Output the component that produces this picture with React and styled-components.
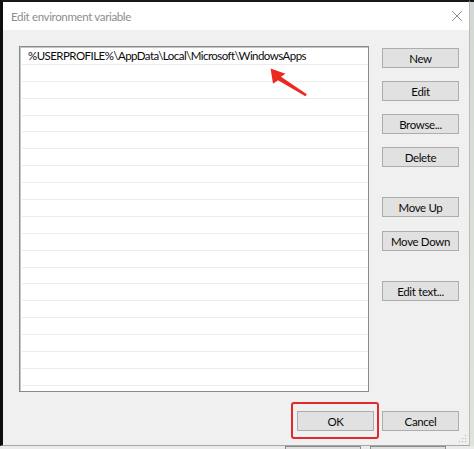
import React from 'react';
import styled, { createGlobalStyle } from 'styled-components';

const FONT = '"Lato", "Liberation Sans", sans-serif';

const Global = createGlobalStyle`
  html, body { margin: 0; padding: 0; background: #e3e3e3; }
  body { font-family: ${FONT}; }
  #root { width: 474px; height: 449px; }
`;

const Page = styled.div`
  width: 474px;
  height: 449px;
  overflow: hidden;
  display: flex;
  flex-direction: column;
  background: #e6e6e6;
`;

const Upper = styled.div`
  display: flex;
  height: 446px;
  flex: none;
`;

const Dialog = styled.div`
  width: 470px;
  box-sizing: border-box;
  display: flex;
  flex-direction: column;
  border-left: 3px solid #0e0e0e;
  border-top: 2px solid #181818;
  border-right: 1px solid #bcbcbc;
  border-bottom: 1px solid #a6a6a6;
  background: #f0f0f0;
  position: relative;
`;

const SideStrip = styled.div`
  flex: 1;
  border-top: 2px solid #181818;
  background: linear-gradient(#d4d8d4, #dfe4da);
`;

const TitleBar = styled.div`
  height: 28px;
  flex: none;
  background: #ffffff;
  display: flex;
  align-items: center;
  justify-content: space-between;
  padding: 0 6px 0 8px;
`;

const Title = styled.span`
  font-size: 11.5px;
  letter-spacing: -0.35px;
  color: #8d8d8d;
`;

const Body = styled.div`
  flex: 1;
  display: flex;
  flex-direction: column;
  padding: 16px 10px 14px 16px;
`;

const Main = styled.div`
  display: flex;
  gap: 13px;
`;

const List = styled.div`
  position: relative;
  width: 350px;
  height: 346px;
  box-sizing: border-box;
  background: #ffffff;
  border: 1px solid #8a8a8a;
  box-shadow: inset 1px 1px 0 #c4c4c4;
  overflow: hidden;
  padding-top: 1px;
`;

const Row = styled.div`
  height: 16.9px;
  box-sizing: border-box;
  margin-left: 2px;
  border-bottom: 1px solid #ececec;
  display: flex;
  align-items: center;
  padding-left: 6px;
  font-size: 11.5px;
  letter-spacing: -0.55px;
  color: #0a0a0a;
  white-space: nowrap;
`;

const ButtonCol = styled.div`
  display: flex;
  flex-direction: column;
  padding-top: 2px;
`;

const Button = styled.button`
  width: 77px;
  height: 20px;
  box-sizing: border-box;
  margin: ${p => p.$top || 0}px 0 0 0;
  padding: 0;
  background: #e1e1e1;
  border: 1px solid #adadad;
  font-family: ${FONT};
  font-size: 11.5px;
  letter-spacing: -0.35px;
  color: #0a0a0a;
  display: flex;
  align-items: center;
  justify-content: center;
`;

const Footer = styled.div`
  margin-top: auto;
  display: flex;
  justify-content: flex-end;
  gap: 8px;
`;

const Highlight = styled.div`
  position: relative;
  display: flex;
`;

const RedBox = styled.div`
  position: absolute;
  left: -6px;
  right: -5px;
  top: -9px;
  bottom: -8px;
  border: 2.5px solid #e3282b;
  border-radius: 3px;
  pointer-events: none;
`;

const Annotation = styled.svg`
  position: absolute;
  left: 0;
  top: 0;
  width: 100%;
  height: 100%;
  pointer-events: none;
`;

const Grip = styled.svg`
  position: absolute;
  right: 2px;
  bottom: 2px;
  width: 8px;
  height: 8px;
`;

const Peek = styled.div`
  flex: 1;
  display: flex;
  background: #ebebeb;
  padding-left: 285px;
  gap: 9px;
`;

const PeekButton = styled.div`
  width: ${p => p.$w}px;
  box-sizing: border-box;
  border: 1px solid #8a8a8a;
  border-bottom: none;
  background: #dedede;
`;

const rows = Array.from({ length: 21 }, (_, i) =>
  i === 0 ? '%USERPROFILE%\\AppData\\Local\\Microsoft\\WindowsApps' : ''
);

export default function App() {
  return (
    <>
      <Global />
      <Page>
        <Upper>
          <Dialog>
            <TitleBar>
              <Title>Edit environment variable</Title>
              <svg width="12" height="12" viewBox="0 0 12 12">
                <path d="M1 1 L11 11 M11 1 L1 11" stroke="#8e8e8e" strokeWidth="1" fill="none" />
              </svg>
            </TitleBar>
            <Body>
              <Main>
                <List>
                  {rows.map((t, i) => (
                    <Row key={i}>{t}</Row>
                  ))}
                  <Annotation viewBox="0 0 350 346" preserveAspectRatio="none">
                    <polygon
                      points="252,21.5 267,27 262.5,30 288.5,47.5 287,49.5 259.5,33.5 254.5,37"
                      fill="#ea2a1f"
                    />
                  </Annotation>
                </List>
                <ButtonCol>
                  <Button>New</Button>
                  <Button $top={13}>Edit</Button>
                  <Button $top={13}>Browse...</Button>
                  <Button $top={13}>Delete</Button>
                  <Button $top={30}>Move Up</Button>
                  <Button $top={14}>Move Down</Button>
                  <Button $top={30}>Edit text...</Button>
                </ButtonCol>
              </Main>
              <Footer>
                <Highlight>
                  <Button>OK</Button>
                  <RedBox />
                </Highlight>
                <Button>Cancel</Button>
              </Footer>
            </Body>
            <Grip viewBox="0 0 8 8">
              <rect x="6" y="0" width="1.2" height="1.2" fill="#bdbdbd" />
              <rect x="3" y="3" width="1.2" height="1.2" fill="#bdbdbd" />
              <rect x="6" y="3" width="1.2" height="1.2" fill="#bdbdbd" />
              <rect x="0" y="6" width="1.2" height="1.2" fill="#bdbdbd" />
              <rect x="3" y="6" width="1.2" height="1.2" fill="#bdbdbd" />
              <rect x="6" y="6" width="1.2" height="1.2" fill="#bdbdbd" />
            </Grip>
          </Dialog>
          <SideStrip />
        </Upper>
        <Peek>
          <PeekButton $w={76} />
          <PeekButton $w={76} />
        </Peek>
      </Page>
    </>
  );
}
